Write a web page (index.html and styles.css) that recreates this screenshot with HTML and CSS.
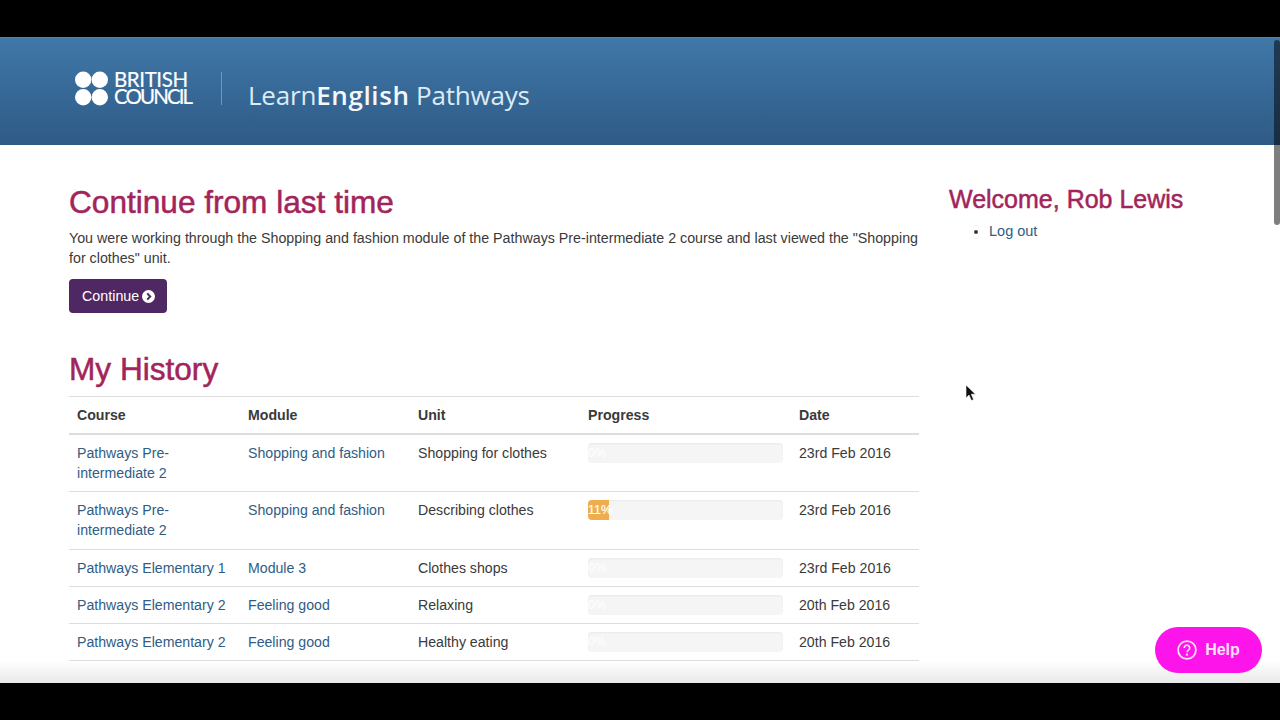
FILE: index.html
```html
<!DOCTYPE html>
<html lang="en">
<head>
<meta charset="utf-8">
<title>LearnEnglish Pathways</title>
<link rel="stylesheet" href="styles.css">
</head>
<body>
<div class="stage">
  <div class="page">
    <header class="banner">
      <div class="bc-logo">
        <svg class="bc-dots" width="33" height="35" viewBox="0 0 33 35" aria-hidden="true">
          <circle cx="8.2" cy="8.7" r="8.2"/><circle cx="24.8" cy="8.7" r="8.2"/>
          <circle cx="8.2" cy="26.3" r="8.2"/><circle cx="24.8" cy="26.3" r="8.2"/>
        </svg>
        <div class="bc-name"><span class="line-a">BRITISH</span><span class="line-b">COUNCIL</span></div>
      </div>
      <div class="divider"></div>
      <div class="product">Learn<b>English</b> Pathways</div>
    </header>
    <div class="content">
      <main class="primary">
        <h1>Continue from last time</h1>
        <p class="lead">You were working through the Shopping and fashion module of the Pathways Pre-intermediate 2 course and last viewed the "Shopping for clothes" unit.</p>
        <a class="btn">Continue
          <svg class="btn-icon" width="13" height="13" viewBox="0 0 13 13" aria-hidden="true"><circle cx="6.5" cy="6.5" r="6.5" fill="#fff"/><path d="M5.2 3.4 8.2 6.5 5.2 9.6" fill="none" stroke="#4f2763" stroke-width="2"/></svg>
        </a>
        <h1 class="history">My History</h1>
        <table>
          <colgroup><col class="c1"><col class="c2"><col class="c3"><col class="c4"><col class="c5"></colgroup>
          <thead><tr><th>Course</th><th>Module</th><th>Unit</th><th>Progress</th><th>Date</th></tr></thead>
          <tbody>
            <tr><td><a>Pathways Pre-intermediate 2</a></td><td><a>Shopping and fashion</a></td><td>Shopping for clothes</td><td><div class="bar"><span class="zero">0%</span></div></td><td>23rd Feb 2016</td></tr>
            <tr><td><a>Pathways Pre-intermediate 2</a></td><td><a>Shopping and fashion</a></td><td>Describing clothes</td><td><div class="bar"><div class="fill" style="width:11%">11%</div></div></td><td>23rd Feb 2016</td></tr>
            <tr><td><a>Pathways Elementary 1</a></td><td><a>Module 3</a></td><td>Clothes shops</td><td><div class="bar"><span class="zero">0%</span></div></td><td>23rd Feb 2016</td></tr>
            <tr><td><a>Pathways Elementary 2</a></td><td><a>Feeling good</a></td><td>Relaxing</td><td><div class="bar"><span class="zero">0%</span></div></td><td>20th Feb 2016</td></tr>
            <tr><td><a>Pathways Elementary 2</a></td><td><a>Feeling good</a></td><td>Healthy eating</td><td><div class="bar"><span class="zero">0%</span></div></td><td>20th Feb 2016</td></tr>
          </tbody>
        </table>
      </main>
      <aside class="side">
        <h2>Welcome, Rob Lewis</h2>
        <ul><li><a>Log out</a></li></ul>
      </aside>
    </div>
    <div class="fade"></div>
    <div class="scrollbar"></div>
    <svg class="cursor" width="12" height="18" viewBox="0 0 12 18" aria-hidden="true"><path d="M1 1v13l3-3 2.4 5.5 2.2-1L6.300 10.200H10.500z" fill="#111" stroke="#fff" stroke-width=".6"/></svg>
    <a class="help">
      <svg width="20" height="20" viewBox="0 0 20 20" aria-hidden="true"><circle cx="10" cy="10" r="8.900" fill="none" stroke="#fde0fb" stroke-width="1.800"/><path d="M7.300 7.900a2.700 2.700 0 1 1 4.200 2.200c-1 .7-1.500 1.100-1.500 2.200" fill="none" stroke="#fde0fb" stroke-width="1.700"/><circle cx="10" cy="14.700" r="1.100" fill="#fde0fb"/></svg>
      <span>Help</span>
    </a>
  </div>
</div>
</body>
</html>
```
FILE: styles.css
```css
* { box-sizing: border-box; }
html, body { margin: 0; height: 100%; background: #000; }
body { font-family: "Liberation Sans", Arial, sans-serif; color: #3a3a3a; font-size: 14.15px; line-height: 20px; overflow: hidden; }
.stage { height: 720px; padding: 37px 0; }
.page { position: relative; height: 646px; background: #fff; overflow: hidden; }

.banner { height: 108px; background: linear-gradient(#3f78a8, #2f5a86); display: flex; align-items: center; padding-left: 75px; padding-top: 1px; box-shadow: inset 0 1px 0 #5d7f9c; color: #eef5fa; }
.bc-logo { display: flex; align-items: center; width: 146px; margin-top: -7px; }
.bc-dots { fill: #fff; flex: none; }
.bc-name { display: flex; flex-direction: column; margin-left: 6px; font-family: Lato, sans-serif; font-size: 20.5px; line-height: 17px; color: #fff; white-space: nowrap; -webkit-text-stroke: .2px #fff; }
.line-a { letter-spacing: -.4px; }
.line-b { letter-spacing: -1.9px; }
.divider { width: 1px; height: 33px; background: #6f98ba; margin-top: -6px; }
.product { margin-left: 26px; font-family: "Open Sans", sans-serif; font-weight: 400; font-size: 26px; line-height: 32px; margin-top: 6px; color: #dcebf6; letter-spacing: -.2px; white-space: nowrap; }
.product b { font-weight: 600; color: #f4f8fb; letter-spacing: .6px; }

.content { display: flex; padding: 0 0 0 69px; }
.primary { width: 850px; flex: none; }
.side { margin-left: 30px; padding-top: 40px; font-size: 14.5px; }

h1, h2 { margin: 0; color: #a3245a; font-weight: 400; -webkit-text-stroke: .5px #a3245a; }
h1 { font-size: 31.6px; line-height: 36px; padding-top: 39px; height: 75px; }
.lead { margin: 8px -2px 11px 0; font-size: 14.25px; }
.btn { display: inline-flex; align-items: center; gap: 3px; height: 34px; padding: 0 12px 0 13px; background: #4f2763; color: #fff; border-radius: 4px; font-size: 14.3px; }
.history { padding-top: 38px; height: 83px; margin-top: 0; }
.btn-icon { flex: none; }

table { width: 850px; border-collapse: collapse; table-layout: fixed; }
.c1 { width: 171px; } .c2 { width: 170px; } .c3 { width: 170px; } .c4 { width: 211px; } .c5 { width: 128px; }
th { text-align: left; padding: 8px; border-top: 1px solid #ddd; border-bottom: 2px solid #ddd; font-weight: 700; line-height: 20px; }
td { padding: 8px; border-bottom: 1px solid #ddd; vertical-align: top; line-height: 20.15px; }
a { color: #2f5d85; }
.bar { width: 195px; height: 20px; background: #f5f5f5; border-radius: 4px; overflow: hidden; box-shadow: inset 0 1px 2px rgba(0,0,0,.05); font-size: 12.5px; color: #fff; white-space: nowrap; }
.zero { display: block; }
.fill { height: 20px; background: #f0ad4e; overflow: visible; -webkit-text-stroke: .2px #fff; }

.side h2 { font-size: 25px; line-height: 28px; }
.side ul { margin: 8px 0 0; padding-left: 40px; }

.fade { position: absolute; left: 0; right: 0; bottom: 0; height: 22px; background: linear-gradient(rgba(235,235,235,0), #e9e9e9); }
.scrollbar { position: absolute; right: 0; top: 3px; width: 6px; height: 185px; background: rgba(0,0,0,.5); border-radius: 3px; }
.cursor { position: absolute; left: 965px; top: 347px; }
.help { position: absolute; left: 1155px; top: 590px; width: 107px; height: 46px; border-radius: 23px; background: #fc14ea; color: #fde0fb; display: flex; align-items: center; justify-content: center; gap: 8px; font-weight: 700; font-size: 16px; }
```
